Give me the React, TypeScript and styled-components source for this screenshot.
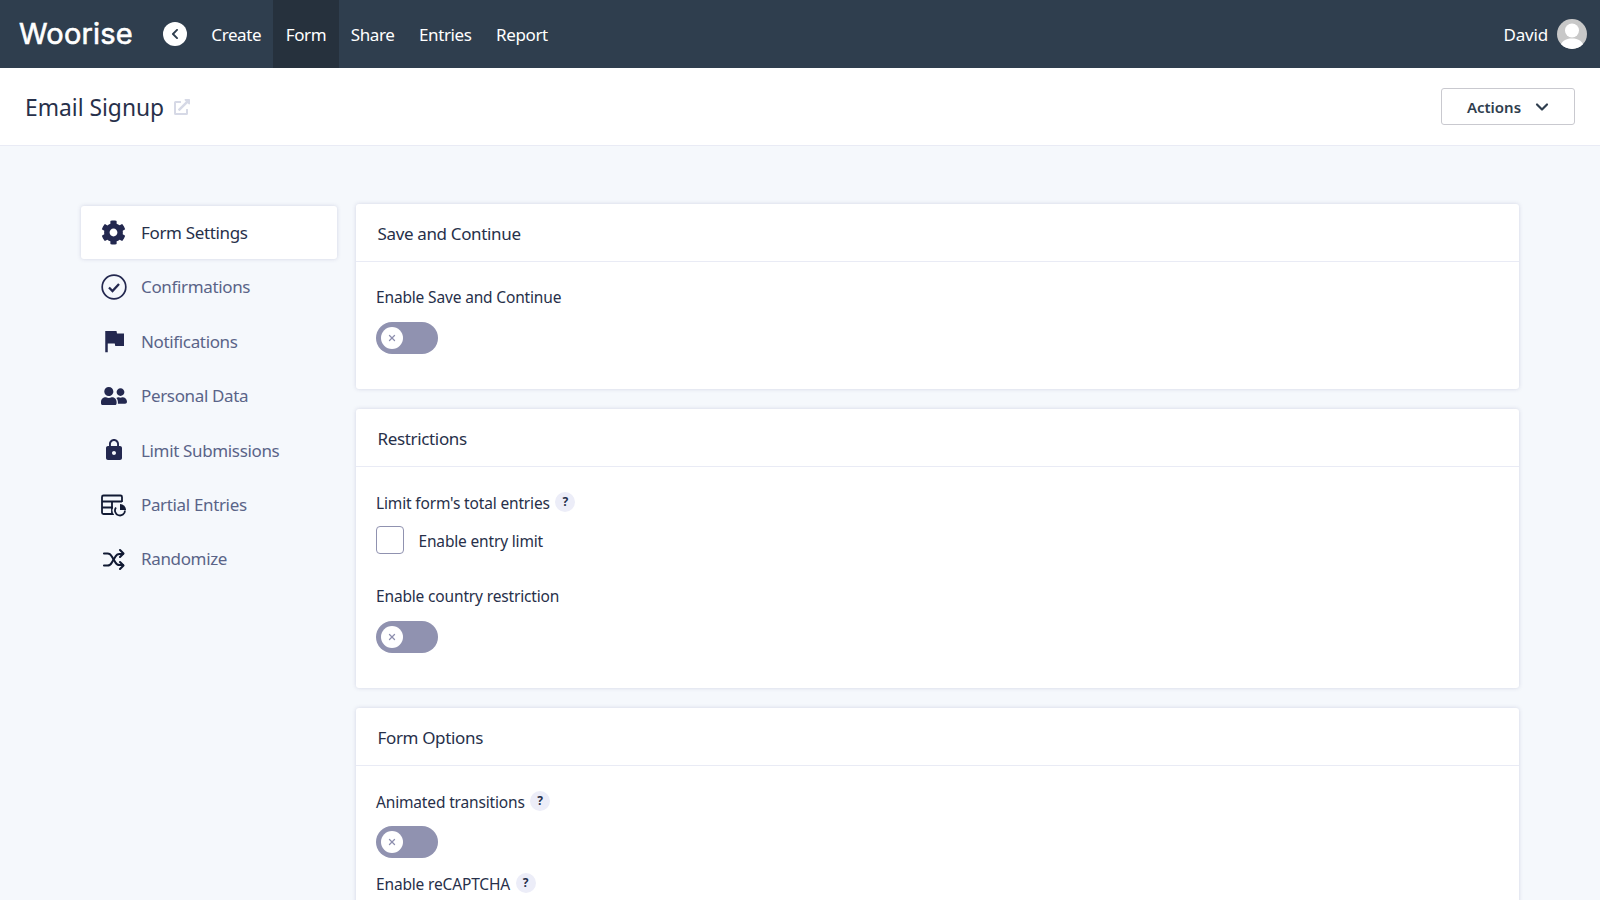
import React from 'react';
import styled, { createGlobalStyle } from 'styled-components';
import { FaCog, FaUserFriends, FaChevronLeft, FaExternalLinkAlt } from 'react-icons/fa';
import { MdFlag, MdLock } from 'react-icons/md';
import { ChevronDown, X } from 'lucide-react';

const Global = createGlobalStyle`
  html, body { margin: 0; padding: 0; height: 900px; overflow: hidden; background: #f5f8fc; }
  body { font-family: "Noto Sans", "Liberation Sans", sans-serif; color: #27304a; }
  * { box-sizing: border-box; }
`;
const Page = styled.div`width: 1600px; height: 900px; overflow: hidden; display: flex; flex-direction: column;`;
const TopBar = styled.header`height: 68px; flex: none; background: #2f3e4e; display: flex; align-items: stretch; color: #fff; padding-left: 19px; padding-right: 13px;`;
const Logo = styled.div`font-family: Inter, "Noto Sans", sans-serif; font-size: 29px; font-weight: 400; letter-spacing: 0.2px; line-height: 68px; width: 144px; -webkit-text-stroke: 0.6px #fff;`;
const BackButton = styled.div`width: 24px; height: 24px; border-radius: 50%; background: #fff; color: #2f3e4e; display: flex; align-items: center; justify-content: center; align-self: center; margin-right: 12px;`;
const NavItem = styled.div<{ $active?: boolean }>`padding: 0 12.3px; display: flex; align-items: center; font-size: 17px; letter-spacing: -0.4px; background: ${p => (p.$active ? '#26313d' : 'transparent')};`;
const UserBox = styled.div`margin-left: auto; display: flex; align-items: center; gap: 9px; font-size: 17px; letter-spacing: -0.2px;`;
const Avatar = styled.div`width: 30px; height: 30px; border-radius: 50%; background: #c8c8c8; overflow: hidden;`;
const SubHeader = styled.div`height: 78px; flex: none; background: #fff; border-bottom: 1px solid #e9ebf5; display: flex; align-items: center; justify-content: space-between; padding: 0 25px;`;
const TitleRow = styled.div`display: flex; align-items: center; gap: 10px;`;
const Title = styled.h1`margin: 0; padding-top: 1px; font-size: 22.8px; font-weight: 400; color: #27304a;`;
const ActionsButton = styled.button`width: 134px; height: 37px; padding: 0 0 0 3px; background: #fff; border: 1px solid #c9c9cf; border-radius: 3px; font: 600 15px "Noto Sans", sans-serif; color: #2f3e4e; display: flex; align-items: center; justify-content: center; gap: 11px;`;
const Body = styled.div`display: flex; align-items: flex-start; padding: 58px 81px 0 81px; gap: 19px;`;
const Sidebar = styled.nav`width: 256px; flex: none; display: flex; flex-direction: column; padding-top: 1.9px;`;
const SideItem = styled.div<{ $active?: boolean }>`height: 53.4px; margin-bottom: 1px; display: flex; align-items: center; padding-left: 19.5px; gap: 14.5px; font-size: 17px; letter-spacing: -0.35px; border-radius: 3px; color: ${p => (p.$active ? '#27304a' : '#5a6488')}; background: ${p => (p.$active ? '#fff' : 'transparent')}; box-shadow: ${p => (p.$active ? '0 0 4px rgba(60,60,120,.18)' : 'none')};`;
const SideIcon = styled.span`width: 26px; height: 26px; display: flex; align-items: center; justify-content: center; color: #23284f; flex: none; svg { flex: none; }`;
const Main = styled.main`flex: 1; display: flex; flex-direction: column; gap: 20px; min-width: 0;`;
const Panel = styled.section`background: #fff; border-radius: 3px; box-shadow: 0 0 4px rgba(60,60,120,.18); flex: none;`;
const PanelHead = styled.h2`margin: 0; height: 58px; display: flex; align-items: center; padding: 2px 21.5px 0; font-size: 17px; letter-spacing: -0.35px; font-weight: 400; color: #27304a; border-bottom: 1px solid #e9ebf5;`;
const PanelBody = styled.div`padding: 24px 20px 35px; display: flex; flex-direction: column;`;
const Label = styled.div<{ $help?: boolean; $spaced?: boolean }>`font-size: 15.5px; letter-spacing: -0.16px; line-height: ${p => (p.$help ? '24px' : '22px')}; margin-bottom: ${p => (p.$help ? '-2px' : '0')}; margin-top: ${p => (p.$spaced ? '14px' : '0')}; display: flex; align-items: center; gap: 5.5px; color: #27304a;`;
const Help = styled.span`width: 20px; height: 20px; border-radius: 50%; background: #ecedf8; font-size: 12px; font-weight: 700; letter-spacing: 0; display: inline-flex; align-items: center; justify-content: center; color: #27304a; position: relative; top: -1px;`;
const Toggle = styled.div`width: 62px; height: 32px; border-radius: 16px; background: #9092b0; margin-top: 14px; padding: 5px; display: flex;`;
const Knob = styled.div`width: 22px; height: 22px; border-radius: 50%; background: #fff; color: #8d8fae; display: flex; align-items: center; justify-content: center;`;
const CheckRow = styled.div`display: flex; align-items: center; gap: 14.5px; margin-top: 13px; margin-bottom: 31px; font-size: 15.5px; letter-spacing: -0.17px;`;
const CheckBox = styled.div`width: 28px; height: 28px; border: 1px solid #9092b0; border-radius: 4px; background: #fff;`;
const CheckText = styled.span`padding-top: 2px;`;

const ToggleOff = () => (<Toggle><Knob><X size={10} strokeWidth={3} /></Knob></Toggle>);
const CheckIcon = () => (
  <svg width="26" height="26" viewBox="0 0 26 26" fill="none" stroke="#23284f">
    <circle cx="13" cy="13" r="11.8" strokeWidth="1.7" />
    <path d="M8 13.5l3.500 3.500 6.500-7" strokeWidth="2.3" />
  </svg>
);
const PartialIcon = () => (
  <svg width="26" height="26" viewBox="0 0 26 26" fill="none" stroke="#111a33" strokeWidth="1.8">
    <path d="M21 10V5a1.5 1.5 0 0 0-1.500-1.500h-17A1.500 1.500 0 0 0 1 5v15.500A1.500 1.500 0 0 0 2.500 22H13M1 9.500h20M1 15.500h11M11 9.500V22" />
    <circle cx="19" cy="18.500" r="7.500" fill="#f5f8fc" stroke="none" />
    <path d="M15 15.500a5 5 0 1 0 9 3" strokeWidth="1.800" />
    <path d="M19 12a6 6 0 0 1 6 6h-6z" fill="#111a33" stroke="none" />
  </svg>
);
const ShuffleIcon = () => (
  <svg width="24" height="24" viewBox="0 0 24 24" fill="none" stroke="#111a33" strokeWidth="2.100" strokeLinecap="round" strokeLinejoin="round">
    <path d="M2 6.500h3.500c2 0 3.200 1 4.200 2.800l3.600 5.900c1 1.800 2.200 2.800 4.200 2.800H21" />
    <path d="M2 18.500h3.500c2 0 3.200-1 4.200-2.800l3.600-5.900c1-1.800 2.200-2.800 4.200-2.800H21" />
    <path d="M18 3l3.500 3.500L18 10M18 15l3.500 3.500L18 22" />
  </svg>
);
const items: [string, React.ReactNode][] = [
  ['Form Settings', <FaCog size={25} />],
  ['Confirmations', <CheckIcon />],
  ['Notifications', <MdFlag size={30} />],
  ['Personal Data', <FaUserFriends size={26} />],
  ['Limit Submissions', <MdLock size={24} />],
  ['Partial Entries', <PartialIcon />],
  ['Randomize', <ShuffleIcon />],
];

export default function App() {
  return (
    <Page>
      <Global />
      <TopBar>
        <Logo>Woorise</Logo>
        <BackButton><FaChevronLeft size={12} /></BackButton>
        {['Create', 'Form', 'Share', 'Entries', 'Report'].map(n => <NavItem key={n} $active={n === 'Form'}>{n}</NavItem>)}
        <UserBox>David<Avatar><svg width="30" height="30" viewBox="0 0 30 30"><circle cx="15" cy="11.500" r="7" fill="#fff" /><path d="M3 30c0-8 6-10.500 12-10.500S27 22 27 30z" fill="#fff" /></svg></Avatar></UserBox>
      </TopBar>
      <SubHeader>
        <TitleRow><Title>Email Signup</Title><FaExternalLinkAlt size={16} color="#d6d9e6" /></TitleRow>
        <ActionsButton>Actions <ChevronDown size={20} strokeWidth={2.6} /></ActionsButton>
      </SubHeader>
      <Body>
        <Sidebar>
          {items.map(([t, i], k) => <SideItem key={t} $active={k === 0}><SideIcon>{i}</SideIcon>{t}</SideItem>)}
        </Sidebar>
        <Main>
          <Panel>
            <PanelHead>Save and Continue</PanelHead>
            <PanelBody>
              <Label>Enable Save and Continue</Label>
              <ToggleOff />
            </PanelBody>
          </Panel>
          <Panel>
            <PanelHead>Restrictions</PanelHead>
            <PanelBody>
              <Label $help>Limit form's total entries <Help>?</Help></Label>
              <CheckRow><CheckBox /><CheckText>Enable entry limit</CheckText></CheckRow>
              <Label>Enable country restriction</Label>
              <ToggleOff />
            </PanelBody>
          </Panel>
          <Panel>
            <PanelHead>Form Options</PanelHead>
            <PanelBody>
              <Label $help>Animated transitions <Help>?</Help></Label>
              <ToggleOff />
              <Label $help $spaced>Enable reCAPTCHA <Help>?</Help></Label>
            </PanelBody>
          </Panel>
        </Main>
      </Body>
    </Page>
  );
}
